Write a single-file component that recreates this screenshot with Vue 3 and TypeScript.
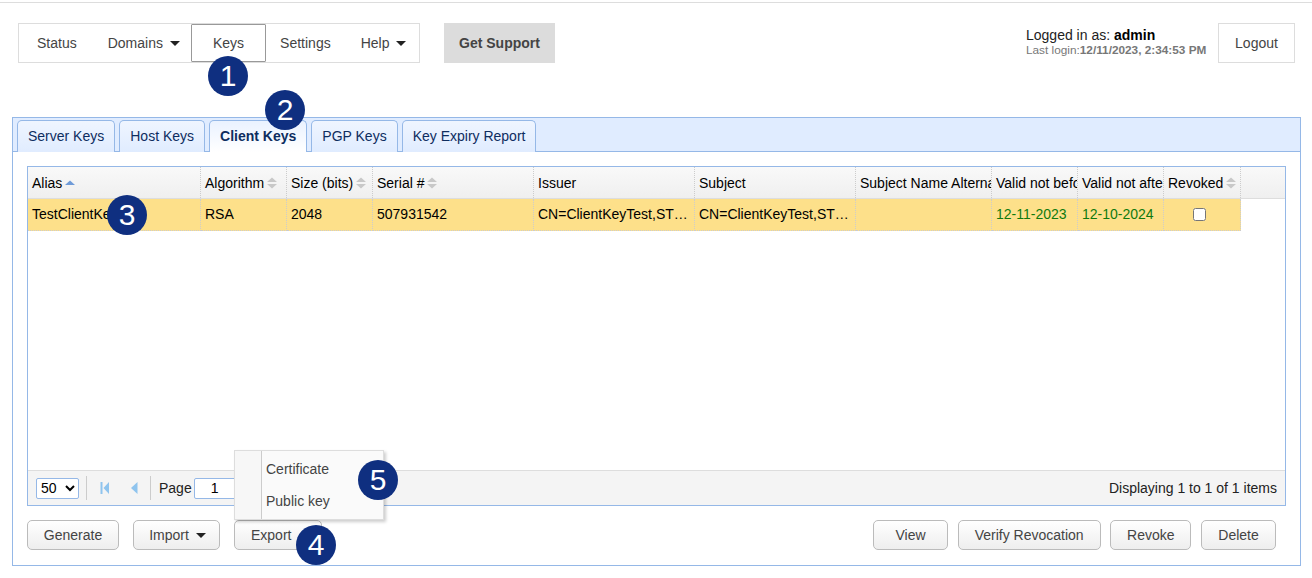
<script setup lang="ts">
interface Col { label: string; sort: '' | 'asc' | 'both'; width: number }
const cols: Col[] = [
  { label: 'Alias', sort: 'asc', width: 173 },
  { label: 'Algorithm', sort: 'both', width: 86 },
  { label: 'Size (bits)', sort: 'both', width: 86 },
  { label: 'Serial #', sort: 'both', width: 161 },
  { label: 'Issuer', sort: '', width: 161 },
  { label: 'Subject', sort: '', width: 161 },
  { label: 'Subject Name Alternative', sort: '', width: 136 },
  { label: 'Valid not before', sort: '', width: 86 },
  { label: 'Valid not after', sort: '', width: 86 },
  { label: 'Revoked', sort: 'both', width: 77 }
]
const template = cols.map((c) => c.width + 'px').join(' ')
const tabs = ['Server Keys', 'Host Keys', 'Client Keys', 'PGP Keys', 'Key Expiry Report']
const dn = 'CN=ClientKeyTest,ST=Minnesota,L=Minneapolis,O=Test,C=US'
const leftButtons = ['Generate', 'Import', 'Export']
const rightButtons = ['View', 'Verify Revocation', 'Revoke', 'Delete']
</script>

<template>
  <div class="page">
    <header class="top">
      <nav class="menu">
        <a class="nav status">Status</a>
        <a class="nav domains">Domains<span class="caret"></span></a>
        <a class="nav keys">Keys</a>
        <a class="nav settings">Settings</a>
        <a class="nav help">Help<span class="caret"></span></a>
      </nav>
      <a class="support">Get Support</a>
      <div class="login">
        <div class="who">Logged in as: <b>admin</b></div>
        <div class="last">Last login:<b>12/11/2023, 2:34:53 PM</b></div>
      </div>
      <a class="logout">Logout</a>
    </header>

    <section class="panel">
      <div class="tabs">
        <a v-for="t in tabs" :key="t" class="tab" :class="{ active: t === 'Client Keys' }">{{ t }}</a>
      </div>
      <div class="body">
        <div class="grid">
          <div class="head">
            <div class="cols" :style="{ gridTemplateColumns: template }">
              <div v-for="c in cols" :key="c.label" class="hcell">
                <span>{{ c.label }}</span>
                <svg v-if="c.sort === 'asc'" class="sort" width="10" height="10" viewBox="0 0 10 10">
                  <path d="M0 7 L5 2.5 L10 7 Z" fill="#6f9bd8" />
                </svg>
                <svg v-else-if="c.sort === 'both'" class="sort" width="10" height="12" viewBox="0 0 10 12">
                  <path d="M0 5 L5 0.5 L10 5 Z M0 7 L5 11.5 L10 7 Z" fill="#c8c8c8" />
                </svg>
              </div>
            </div>
          </div>
          <div class="rows">
            <div class="cols row" :style="{ gridTemplateColumns: template }">
              <div class="cell">TestClientKey</div>
              <div class="cell">RSA</div>
              <div class="cell">2048</div>
              <div class="cell">507931542</div>
              <div class="cell">{{ dn }}</div>
              <div class="cell">{{ dn }}</div>
              <div class="cell"></div>
              <div class="cell valid">12-11-2023</div>
              <div class="cell valid">12-10-2024</div>
              <div class="cell center"><input type="checkbox" class="check" /></div>
            </div>
          </div>
          <div class="pager">
            <select class="size"><option>50</option></select>
            <i class="sep first-sep"></i>
            <svg class="pg first" width="10" height="14" viewBox="0 0 10 14">
              <rect x="0.5" y="1" width="2" height="12" fill="#8fc4ee" />
              <path d="M9 1 V13 L3.5 7 Z" fill="#8fc4ee" />
            </svg>
            <svg class="pg prev" width="8" height="14" viewBox="0 0 8 14">
              <path d="M7.5 1 V13 L1 7 Z" fill="#8fc4ee" />
            </svg>
            <i class="sep second-sep"></i>
            <span class="page-label">Page</span>
            <input class="page-input" value="1" />
            <span class="info">Displaying 1 to 1 of 1 items</span>
          </div>
        </div>

        <div class="actions">
          <div class="group">
            <a v-for="b in leftButtons" :key="b" class="btn" :class="b.toLowerCase()">
              {{ b }}<span v-if="b === 'Import'" class="caret"></span>
            </a>
          </div>
          <div class="group right">
            <a v-for="b in rightButtons" :key="b" class="btn" :class="b.split(' ')[0].toLowerCase()">{{ b }}</a>
          </div>
        </div>

        <div class="popup">
          <div class="popup-item">Certificate</div>
          <div class="popup-item">Public key</div>
        </div>
      </div>
    </section>

    <span class="badge b1">1</span>
    <span class="badge b2">2</span>
    <span class="badge b3">3</span>
    <span class="badge b4">4</span>
    <span class="badge b5">5</span>
  </div>
</template>

<style>
html, body { margin: 0; background: #fff; overflow: hidden; }
</style>

<style scoped>
.page {
  position: relative;
  width: 1312px;
  height: 578px;
  box-sizing: border-box;
  padding-top: 2px;
  font-family: "Liberation Sans", Arial, sans-serif;
  font-size: 14px;
  color: #000;
  overflow: hidden;
}
.top {
  display: flex;
  align-items: flex-start;
  height: 115px;
  box-sizing: border-box;
  border-top: 1px solid #ddd;
  padding: 20px 17px 0 18px;
}
.menu {
  display: flex;
  align-items: center;
  width: 402px;
  height: 40px;
  box-sizing: border-box;
  border: 1px solid #ddd;
  color: #444;
}
.nav { display: flex; align-items: center; height: 38px; box-sizing: border-box; }
.status { padding: 0 15px 0 18px; }
.domains { padding: 0 11px 0 16px; }
.keys { padding: 0 21px; border: 1px solid #999; border-radius: 1px; }
.settings { padding: 0 14px 0 14px; }
.help { padding: 0 0 0 16px; }
.caret {
  display: inline-block;
  width: 0;
  height: 0;
  margin-left: 7px;
  border-left: 5px solid transparent;
  border-right: 5px solid transparent;
  border-top: 5px solid #222;
}
.support {
  margin-left: 24px;
  width: 111px;
  height: 40px;
  line-height: 40px;
  text-align: center;
  background: #dcdcdc;
  color: #444;
  font-weight: bold;
}
.login { margin-left: auto; margin-top: 5px; width: 192px; }
.who { font-size: 14px; line-height: 15px; color: #222; }
.who b { color: #000; }
.last { font-size: 11.8px; line-height: 14px; color: #777; }
.logout {
  width: 77px;
  height: 40px;
  box-sizing: border-box;
  border: 1px solid #ddd;
  line-height: 39px;
  text-align: center;
  color: #444;
}

.panel {
  width: 1289px;
  height: 449px;
  margin-left: 12px;
  box-sizing: border-box;
  border: 1px solid #95b8e7;
  display: flex;
  flex-direction: column;
}
.tabs {
  display: flex;
  gap: 4px;
  height: 34px;
  box-sizing: border-box;
  padding: 2px 0 0 4px;
  background: #e0ecff;
  border-bottom: 1px solid #95b8e7;
  color: #0e2d5f;
}
.tab {
  height: 32px;
  box-sizing: border-box;
  padding: 0 10px;
  line-height: 30px;
  border: 1px solid #95b8e7;
  border-bottom: 0;
  border-radius: 5px 5px 0 0;
  background: linear-gradient(#eff5ff, #e0ecff);
}
.tab.active {
  height: 32px;
  font-weight: bold;
  background: linear-gradient(#eaf2ff, #fff);
  margin-bottom: -1px;
}
.body { position: relative; flex: 1; padding: 14px 14px 0 14px; background: #fff; }
.grid {
  width: 1259px;
  height: 340px;
  box-sizing: border-box;
  border: 1px solid #95b8e7;
  display: flex;
  flex-direction: column;
}
.head {
  height: 32px;
  box-sizing: border-box;
  border-bottom: 1px solid #ddd;
  background: linear-gradient(#f9f9f9, #efefef);
}
.cols { display: grid; width: max-content; }
.hcell {
  display: flex;
  align-items: center;
  gap: 3px;
  height: 31px;
  box-sizing: border-box;
  padding-left: 4px;
  border-right: 1px dotted #ccc;
  white-space: nowrap;
  overflow: hidden;
  color: #000;
}
.sort { flex: none; }
.rows { flex: 1; }
.row { background: #fde08a; }
.cell {
  height: 32px;
  box-sizing: border-box;
  padding: 0 4px;
  line-height: 31px;
  border-right: 1px dotted #ccc;
  border-bottom: 1px dotted #ccc;
  white-space: nowrap;
  overflow: hidden;
  text-overflow: ellipsis;
  color: #000;
}
.valid { color: #0f7a0f; }
.center { display: flex; align-items: center; justify-content: center; padding: 0 6px 0 0; }
.check { width: 13px; height: 13px; margin: 0; }
.pager {
  position: relative;
  display: flex;
  align-items: center;
  height: 35px;
  box-sizing: border-box;
  border-top: 1px solid #ddd;
  background: #f4f4f4;
  padding: 0 8px;
  color: #222;
}
.size {
  width: 43px;
  height: 21px;
  box-sizing: border-box;
  border: 1px solid #95b8e7;
  border-radius: 2px;
  background: #fff;
  font: 14px "Liberation Sans", Arial, sans-serif;
  color: #000;
}
.sep { width: 1px; height: 24px; background: #ccc; flex: none; }
.first-sep { margin-left: 7px; }
.pg { flex: none; }
.first { margin-left: 13px; }
.prev { margin-left: 20px; }
.second-sep { margin-left: 12px; }
.page-label { margin-left: 8px; }
.page-input {
  width: 52px;
  height: 21px;
  margin-left: 2px;
  box-sizing: border-box;
  border: 1px solid #95b8e7;
  border-radius: 2px;
  padding: 0 0 0 16px;
  font: 14px "Liberation Sans", Arial, sans-serif;
  color: #000;
  outline: none;
}
.info { margin-left: auto; }
.actions {
  display: flex;
  justify-content: space-between;
  margin-top: 14px;
  padding-right: 10px;
}
.group { display: flex; gap: 14px; }
.group.right { gap: 9.67px; }
.btn {
  display: flex;
  align-items: center;
  justify-content: center;
  height: 30px;
  box-sizing: border-box;
  border: 1px solid #bbb;
  border-radius: 5px;
  background: linear-gradient(#fff, #eee);
  color: #444;
}
.generate { width: 92px; }
.import { width: 87px; padding-left: 2px; }
.export { width: 88px; justify-content: flex-start; padding-left: 16px; }
.view { width: 75px; }
.verify { width: 143px; }
.revoke { width: 81px; }
.delete { width: 75px; }

.popup {
  position: absolute;
  left: 221px;
  top: 298px;
  width: 150px;
  height: 70px;
  box-sizing: border-box;
  border: 1px solid #ddd;
  background: linear-gradient(90deg, #f7f7f7 26px, #ccc 26px, #ccc 27px, #fafafa 27px);
  box-shadow: 2px 2px 3px rgba(0, 0, 0, 0.2);
  padding: 2px 0 0 31px;
  color: #444;
}
.popup-item { height: 32px; line-height: 32px; }

.badge {
  position: absolute;
  width: 40px;
  height: 40px;
  border-radius: 50%;
  background: #0f2f80;
  color: #fff;
  font-size: 30px;
  line-height: 40px;
  text-align: center;
}
.b1 { left: 208px; top: 56px; }
.b2 { left: 265px; top: 90px; }
.b3 { left: 107px; top: 195px; }
.b4 { left: 296px; top: 525px; }
.b5 { left: 358px; top: 460px; }
</style>
